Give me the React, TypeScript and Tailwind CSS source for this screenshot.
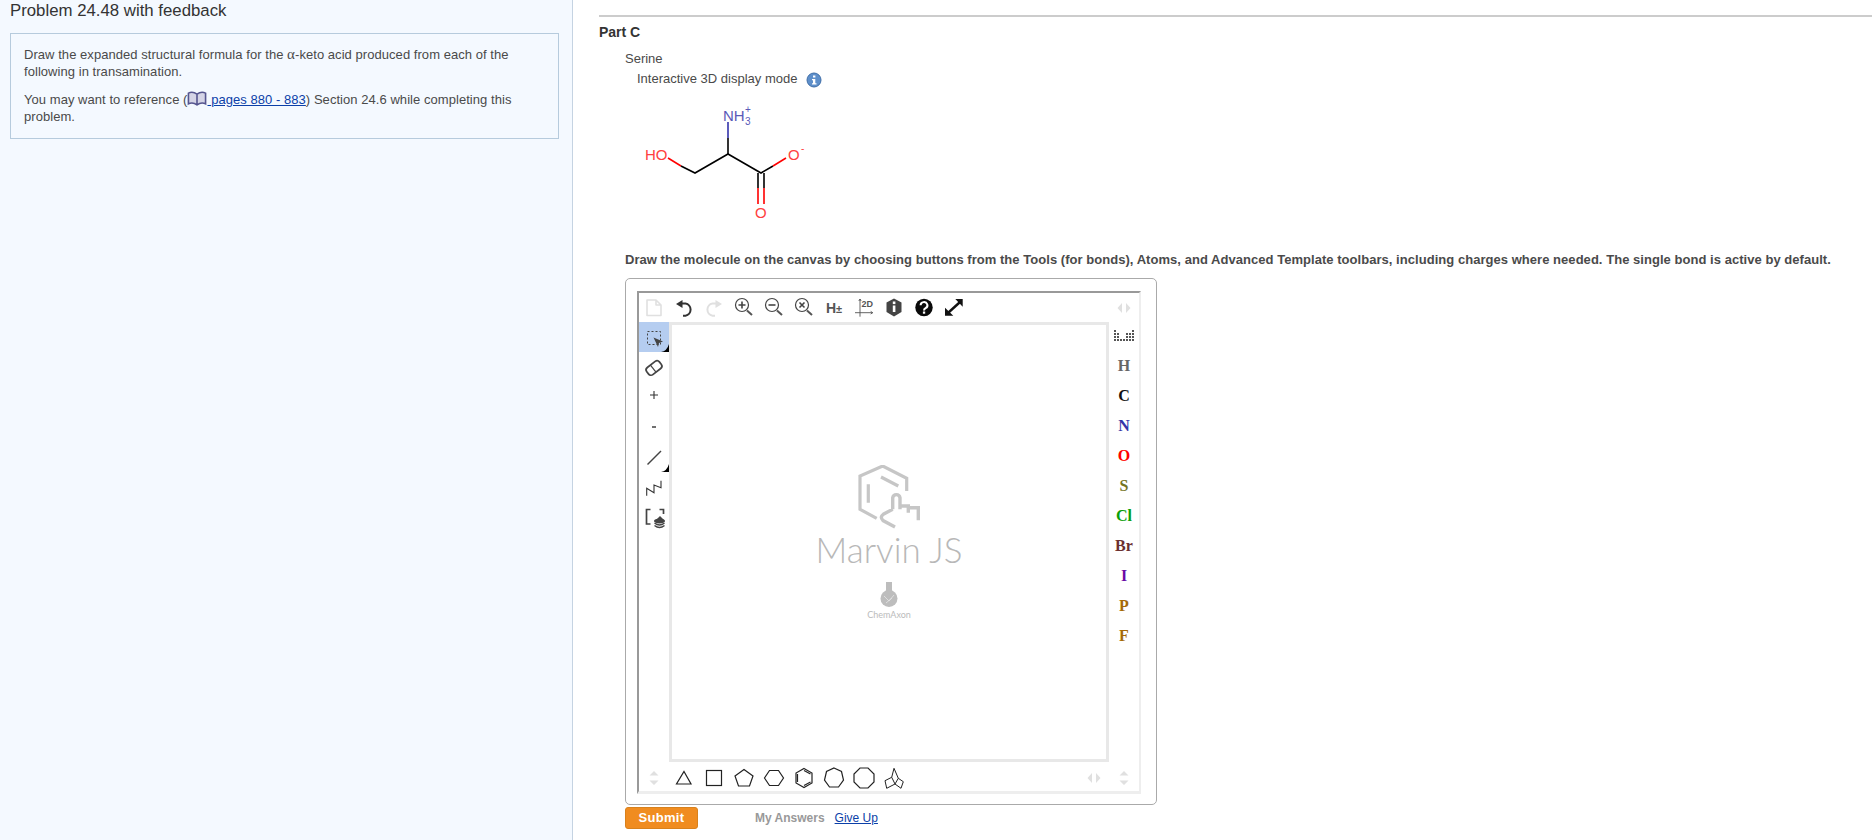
import React from "react";

const font = "[font-family:'Liberation_Sans',Arial,sans-serif]";

function Cell({ children, className = "" }: { children?: React.ReactNode; className?: string }) {
  return <div className={`flex h-[30px] w-[30px] shrink-0 items-center justify-center ${className}`}>{children}</div>;
}

function Ic({ children }: { children: React.ReactNode }) {
  return (
    <svg width="30" height="30" viewBox="0 0 30 30" fill="none" className="block">
      {children}
    </svg>
  );
}

const Corner = () => <path d="M30 22 V30 H22 Q28 29 30 22 Z" fill="#000" />;

function Magnifier({ children }: { children: React.ReactNode }) {
  return (
    <Ic>
      <circle cx="13" cy="12" r="6.5" stroke="#444" strokeWidth="1.2" />
      <path d="M18 17.5 L23 22" stroke="#555" strokeWidth="2" />
      {children}
    </Ic>
  );
}

const topIcons = [
  <Ic key="doc">
    <path d="M8 7 H17 L22 12 V22.5 H8 Z M17 7 V12 H22" stroke="#e0e0e0" strokeWidth="1.6" strokeLinejoin="round" />
  </Ic>,
  <Ic key="undo">
    <path d="M12 10.5 H16.5 A6.2 6.2 0 0 1 16.5 22.7 H14" stroke="#333" strokeWidth="2" />
    <path d="M7 11 L13.5 7 V15 Z" fill="#333" />
  </Ic>,
  <Ic key="redo">
    <path d="M18 10.5 H13.5 A6.2 6.2 0 0 0 13.5 22.7 H16" stroke="#e0e0e0" strokeWidth="2" />
    <path d="M23 11 L16.5 7 V15 Z" fill="#e0e0e0" />
  </Ic>,
  <Magnifier key="in">
    <path d="M9.5 12 H16.5 M13 8.5 V15.5" stroke="#444" strokeWidth="1.6" />
  </Magnifier>,
  <Magnifier key="out">
    <path d="M9.5 12 H16.5" stroke="#444" strokeWidth="1.6" />
  </Magnifier>,
  <Magnifier key="reset">
    <path d="M10.5 9.5 L15.5 14.5 M15.5 9.5 L10.5 14.5" stroke="#444" strokeWidth="1.6" />
  </Magnifier>,
  <div key="h" className={`${font} flex items-baseline text-[14px] font-bold leading-none text-[#555]`}>
    H<span className="text-[11px]">±</span>
  </div>,
  <Ic key="2d">
    <path d="M6 19.7 H23.7 M21.7 18.4 L23.7 19.7 L21.7 21 M11 23.7 V6 M9.8 8 L11 6 L12.2 8" stroke="#555" strokeWidth="0.9" />
    <text x="12.5" y="14" fontSize="9" fontWeight="700" fill="#555" fontFamily="Liberation Sans">2D</text>
  </Ic>,
  <Ic key="info">
    <path d="M15 5.5 L22.5 9.5 V19 L15 23.5 L7.5 19 V9.5 Z" fill="#444" />
    <rect x="13.8" y="8.5" width="2.6" height="2.6" fill="#fff" />
    <rect x="13.8" y="12.5" width="2.6" height="6.5" fill="#fff" />
  </Ic>,
  <Ic key="help">
    <circle cx="15" cy="14.5" r="8.7" fill="#0a0a0a" />
    <path d="M11.6 12.3 A3.4 3.2 0 1 1 16.6 15.1 Q15 15.9 15 17.5" stroke="#fff" strokeWidth="2" />
    <rect x="13.9" y="18.5" width="2.3" height="2.2" fill="#fff" />
  </Ic>,
  <Ic key="expand">
    <path d="M9.5 19.5 L20.5 9.5" stroke="#111" strokeWidth="2.4" />
    <path d="M16.3 6 H23.7 V13.7 Z M6 14.7 V22.7 H14.3 Z" fill="#111" />
  </Ic>,
];

const leftIcons = [
  <Ic key="select">
    <rect x="8.5" y="9.5" width="13" height="13" stroke="#444" strokeWidth="1" strokeDasharray="2 2" />
    <path d="M14.5 15.5 L24 19.5 L20 21 L19 25 Z" fill="#444" />
    <Corner />
  </Ic>,
  <Ic key="erase">
    <g transform="rotate(-38 15 16)">
      <rect x="7" y="11.5" width="16" height="9" rx="3" stroke="#444" strokeWidth="1.7" fill="#fff" />
      <path d="M14 11.5 V20.5" stroke="#444" strokeWidth="1.2" />
    </g>
  </Ic>,
  <Ic key="plus">
    <path d="M11 13 H19 M15 9 V17" stroke="#333" strokeWidth="1.1" />
  </Ic>,
  <Ic key="minus">
    <path d="M13 15 H17" stroke="#222" strokeWidth="1.3" />
  </Ic>,
  <Ic key="line">
    <path d="M8.5 22.5 L22 9" stroke="#444" strokeWidth="1.5" />
    <Corner />
  </Ic>,
  <Ic key="chain">
    <path d="M7.7 23.7 V16.3 L15 20.7 V13 L22 15.7 V8.7" stroke="#333" strokeWidth="1.1" />
  </Ic>,
  <Ic key="bracket">
    <path d="M11.5 7.5 H7.5 V22 H11.5 M20.5 7.5 H24.5 V12" stroke="#444" strokeWidth="1.7" />
    <ellipse cx="20.5" cy="19" rx="5.5" ry="2.5" fill="#444" />
    <path d="M15.5 21 Q20.5 25 25.5 21 M15.5 23.5 Q20.5 27.5 25.5 23.5" stroke="#444" strokeWidth="1.4" />
    <path d="M17 18 L21 14 L25 18 Z" fill="#444" />
  </Ic>,
];

const atoms: [string, string][] = [
  ["H", "text-[#666666]"],
  ["C", "text-[#111111]"],
  ["N", "text-[#3535a8]"],
  ["O", "text-[#ff0000]"],
  ["S", "text-[#75751f]"],
  ["Cl", "text-[#0aa00a]"],
  ["Br", "text-[#6b2f2f]"],
  ["I", "text-[#6a0aa5]"],
  ["P", "text-[#a56a08]"],
  ["F", "text-[#a56a08]"],
];

const shapes = [
  <path key="tri" d="M15 8.5 L22 21 H7.5 Z" />,
  <rect key="sq" x="7.5" y="7.5" width="15" height="15" />,
  <path key="pent" d="M15 6.5 L24 13 L20.5 23 H9.5 L6 13 Z" />,
  <path key="hex" d="M10.5 7.5 H19.5 L24.5 15 L19.5 22.5 H10.5 L5.5 15 Z" />,
  <g key="benz">
    <path d="M15 5.5 L23 10 V20 L15 24.5 L7 20 V10 Z" />
    <path d="M15 7.5 L21.5 11 M21.5 19 L15 22.5 M8.5 19 V11" />
  </g>,
  <path key="hept" d="M15 5 L22.5 8.5 L24.5 17 L19.5 24 H10.5 L5.5 17 L7.5 8.5 Z" />,
  <path key="oct" d="M11 5 H19 L25 11 V19 L19 25 H11 L5 19 V11 Z" />,
  <path key="bicyc" d="M15 5.3 L12.7 14.3 L6 17.7 L7.7 25.3 L16 21 L22 25.3 L24.3 18.7 L19.3 15.3 L15 5.3 M12.7 14.3 L16 21 M19.3 15.3 L16 21" strokeWidth="1" />,
];

function ArrowsLR() {
  return (
    <svg width="30" height="30" viewBox="0 0 30 30" className="block">
      <path d="M13 10 V20 L8.5 15 Z M17 10 V20 L21.5 15 Z" fill="#e0e0e0" />
    </svg>
  );
}

function ArrowsUD() {
  return (
    <svg width="30" height="30" viewBox="0 0 30 30" className="block">
      <path d="M10.5 12.5 L15 8 L19.5 12.5 Z M10.5 17.5 H19.5 L15 22 Z" fill="#e0e0e0" />
    </svg>
  );
}

function Molecule() {
  const t = { fontFamily: "Liberation Sans", fontSize: 15 };
  return (
    <svg width="240" height="130" viewBox="0 0 240 130" className="block" fill="none">
      <g transform="translate(-625 -92)">
        <path d="M668 158 L681 166" stroke="#ff0000" strokeWidth="1.6" />
        <path d="M681 166 L695 173 L728 154 L761 173 L773 166" stroke="#000" strokeWidth="1.6" />
        <path d="M773 166 L786 158" stroke="#ff0000" strokeWidth="1.6" />
        <path d="M728 154 V138" stroke="#000" strokeWidth="1.6" />
        <path d="M728 138 V122" stroke="#3333aa" strokeWidth="1.6" />
        <path d="M758 173 V188 M764 173 V188" stroke="#000" strokeWidth="1.6" />
        <path d="M758 188 V204 M764 188 V204" stroke="#ff0000" strokeWidth="1.6" />
        <text x="645" y="160" fill="#ff4040" {...t}>HO</text>
        <text x="788" y="160" fill="#ff4040" {...t}>O</text>
        <text x="801" y="152" fill="#ff4040" fontFamily="Liberation Sans" fontSize="10">-</text>
        <text x="755" y="218" fill="#ff4040" {...t}>O</text>
        <text x="723" y="121" fill="#5a5ab8" {...t}>NH</text>
        <text x="745" y="113" fill="#5a5ab8" fontFamily="Liberation Sans" fontSize="10">+</text>
        <text x="745" y="125" fill="#5a5ab8" fontFamily="Liberation Sans" fontSize="10">3</text>
      </g>
    </svg>
  );
}

function MarvinLogo() {
  return (
    <svg width="62" height="64" viewBox="0 0 62 64" fill="none" className="block">
      <path d="M48.7 26 V13.3 L24.7 1 L2 11 V44.3 L18.7 53.3" stroke="#c6c6c6" strokeWidth="3.2" />
      <path d="M23 12 L40.3 21 M10.3 19.3 V37.7" stroke="#c6c6c6" strokeWidth="3.2" />
      <path d="M34.7 44.3 V32.7 A3.7 3.7 0 0 1 42 32.7 V44.3 M42 41 H50.3 V47.7 M50.3 42.7 H60.3 V55.3 M34.7 44.3 L25.3 49.3 Q21.5 52 25 55.5 L37 62" stroke="#c6c6c6" strokeWidth="3.4" />
    </svg>
  );
}

function Flask() {
  return (
    <svg width="18" height="26" viewBox="0 0 18 26" className="block">
      <rect x="6" y="0" width="6" height="9" fill="#bdbdbd" />
      <circle cx="9" cy="16.5" r="8.5" fill="#bdbdbd" />
      <path d="M4 14 L9 19 L14 13 M6 21 L12 16" stroke="#e5e5e5" strokeWidth="0.8" fill="none" />
    </svg>
  );
}

export default function App() {
  return (
    <div className={`${font} flex h-[840px] w-[1872px] overflow-hidden bg-white text-[#4a4a4a]`}>
      <aside className="h-full w-[573px] shrink-0 border-r border-[#c5d3e2] bg-[#f4f9ff]">
        <h1 className="pl-[10px] pt-[1px] text-[16.8px] font-normal leading-[20px] text-[#333]">Problem 24.48 with feedback</h1>
        <div className="ml-[10px] mt-[12px] h-[106px] w-[549px] border border-[#b6cbdd] pl-[13px] pr-[20px] pt-[12px] text-[13px] leading-[17px] tracking-[0.05px] text-[#4a4a4a]">
          <p>
            Draw the expanded structural formula for the <span className="[font-family:'Liberation_Serif',serif] text-[15px] leading-[10px]">α</span>-keto acid produced from each of the following in transamination.
          </p>
          <p className="mt-[11px]">
            You may want to reference (
            <a className="text-[#0b3fa8] underline">
              <svg width="20" height="15" viewBox="0 0 18 14" fill="none" className="inline-block align-[-2px]">
                <path d="M1 2 Q5 0 9 3 Q13 0 17 2 V12 Q13 10 9 13 Q5 10 1 12 Z M9 3 V13" stroke="#55558f" strokeWidth="1.5" fill="#d4d4e6" />
              </svg>{" "}
              pages 880 - 883
            </a>
            ) Section 24.6 while completing this problem.
          </p>
        </div>
      </aside>

      <main className="min-w-0 flex-1 pl-[26px]">
        <div className="mt-[15px] h-[2px] bg-[#cccccc]" />
        <h2 className="mt-[7px] text-[14px] font-bold leading-[16px] text-[#333]">Part C</h2>
        <div className="ml-[26px]">
          <div className="mt-[11px] text-[13px] leading-[16px]">Serine</div>
          <div className="ml-[12px] mt-[4px] flex h-[16px] items-center text-[13px] leading-[16px]">
            Interactive 3D display mode
            <svg width="16" height="16" viewBox="0 0 16 16" className="ml-[9px] block translate-y-px">
              <circle cx="8" cy="8" r="7" fill="#5e8fca" stroke="#3f6ea8" />
              <rect x="7" y="3.5" width="2.4" height="2" fill="#fff" />
              <path d="M6 7 H9.3 V11.2 H10.5 V12.4 H6 V11.2 H7 V8.2 H6 Z" fill="#fff" />
            </svg>
          </div>
          <div className="mt-[5px]">
            <Molecule />
          </div>
          <p className="mt-[30px] whitespace-nowrap text-[13px] font-bold leading-[16px] tracking-[0.04px] text-[#4a4a4a]">
            Draw the molecule on the canvas by choosing buttons from the Tools (for bonds), Atoms, and Advanced Template toolbars, including charges where needed. The single bond is active by default.
          </p>

          <div className="mt-[10px] h-[527px] w-[532px] rounded-[5px] border border-[#aaaaaa] pl-[11px] pt-[12px]">
            <div className="w-[504px] border-b-[3px] border-l-2 border-r-2 border-t-2 border-b-[#eeeeee] border-l-[#999999] border-r-[#eeeeee] border-t-[#999999]">
              <div className="flex h-[29px] items-center">
                {topIcons.map((ic, i) => (
                  <Cell key={i}>{ic}</Cell>
                ))}
                <div className="flex-1" />
                <Cell>
                  <ArrowsLR />
                </Cell>
              </div>
              <div className="flex h-[440px]">
                <div className="w-[30px] shrink-0">
                  {leftIcons.map((ic, i) => (
                    <Cell key={i} className={i === 0 ? "bg-[#b5cdf0]" : ""}>
                      {ic}
                    </Cell>
                  ))}
                </div>
                <div className="flex w-[440px] shrink-0 flex-col items-center border-[3px] border-[#e8e8e8] bg-white pt-[140px]">
                  <MarvinLogo />
                  <div className="mt-[3px] text-[35px] font-light leading-[35px] text-[#b8b8b8] [font-family:Lato,sans-serif]">Marvin JS</div>
                  <div className="mt-[15px]">
                    <Flask />
                  </div>
                  <div className="mt-[1px] text-[9px] leading-[12px] text-[#bbbbbb] [font-family:Lato,sans-serif]">ChemAxon</div>
                </div>
                <div className="w-[30px] shrink-0 -translate-y-px">
                  <Cell>
                    <svg width="22" height="14" viewBox="0 0 22 14" className="block">
                      {[
                        [1, 1], [19, 1],
                        [1, 4], [4, 4], [13, 4], [16, 4], [19, 4],
                        [1, 7], [4, 7], [13, 7], [16, 7], [19, 7],
                        [1, 10], [4, 10], [7, 10], [10, 10], [13, 10], [16, 10], [19, 10],
                      ].map(([x, y], i) => (
                        <rect key={i} x={x} y={y} width="2" height="2" fill="#555" />
                      ))}
                    </svg>
                  </Cell>
                  {atoms.map(([a, c]) => (
                    <Cell key={a} className={`[font-family:'Liberation_Serif',serif] text-[16px] font-bold ${c}`}>
                      {a}
                    </Cell>
                  ))}
                </div>
              </div>
              <div className="flex h-[29px] items-center pt-[2px]">
                <Cell>
                  <ArrowsUD />
                </Cell>
                {shapes.map((s, i) => (
                  <Cell key={i}>
                    <svg width="30" height="30" viewBox="0 0 30 30" fill="none" stroke="#222" strokeWidth="1.2" className="block">
                      {s}
                    </svg>
                  </Cell>
                ))}
                <div className="flex-1" />
                <Cell>
                  <ArrowsLR />
                </Cell>
                <Cell>
                  <ArrowsUD />
                </Cell>
              </div>
            </div>
          </div>

          <div className="mt-[2px] flex items-center">
            <button className="h-[22px] w-[73px] rounded-[3px] border border-[#d9811c] bg-[#f08c20] text-[13px] font-bold tracking-[0.3px] text-white">Submit</button>
            <span className="ml-[57px] text-[12px] font-bold text-[#999999]">My Answers</span>
            <a className="ml-[10px] text-[12px] text-[#0b3fa8] underline">Give Up</a>
          </div>
        </div>
      </main>
    </div>
  );
}
